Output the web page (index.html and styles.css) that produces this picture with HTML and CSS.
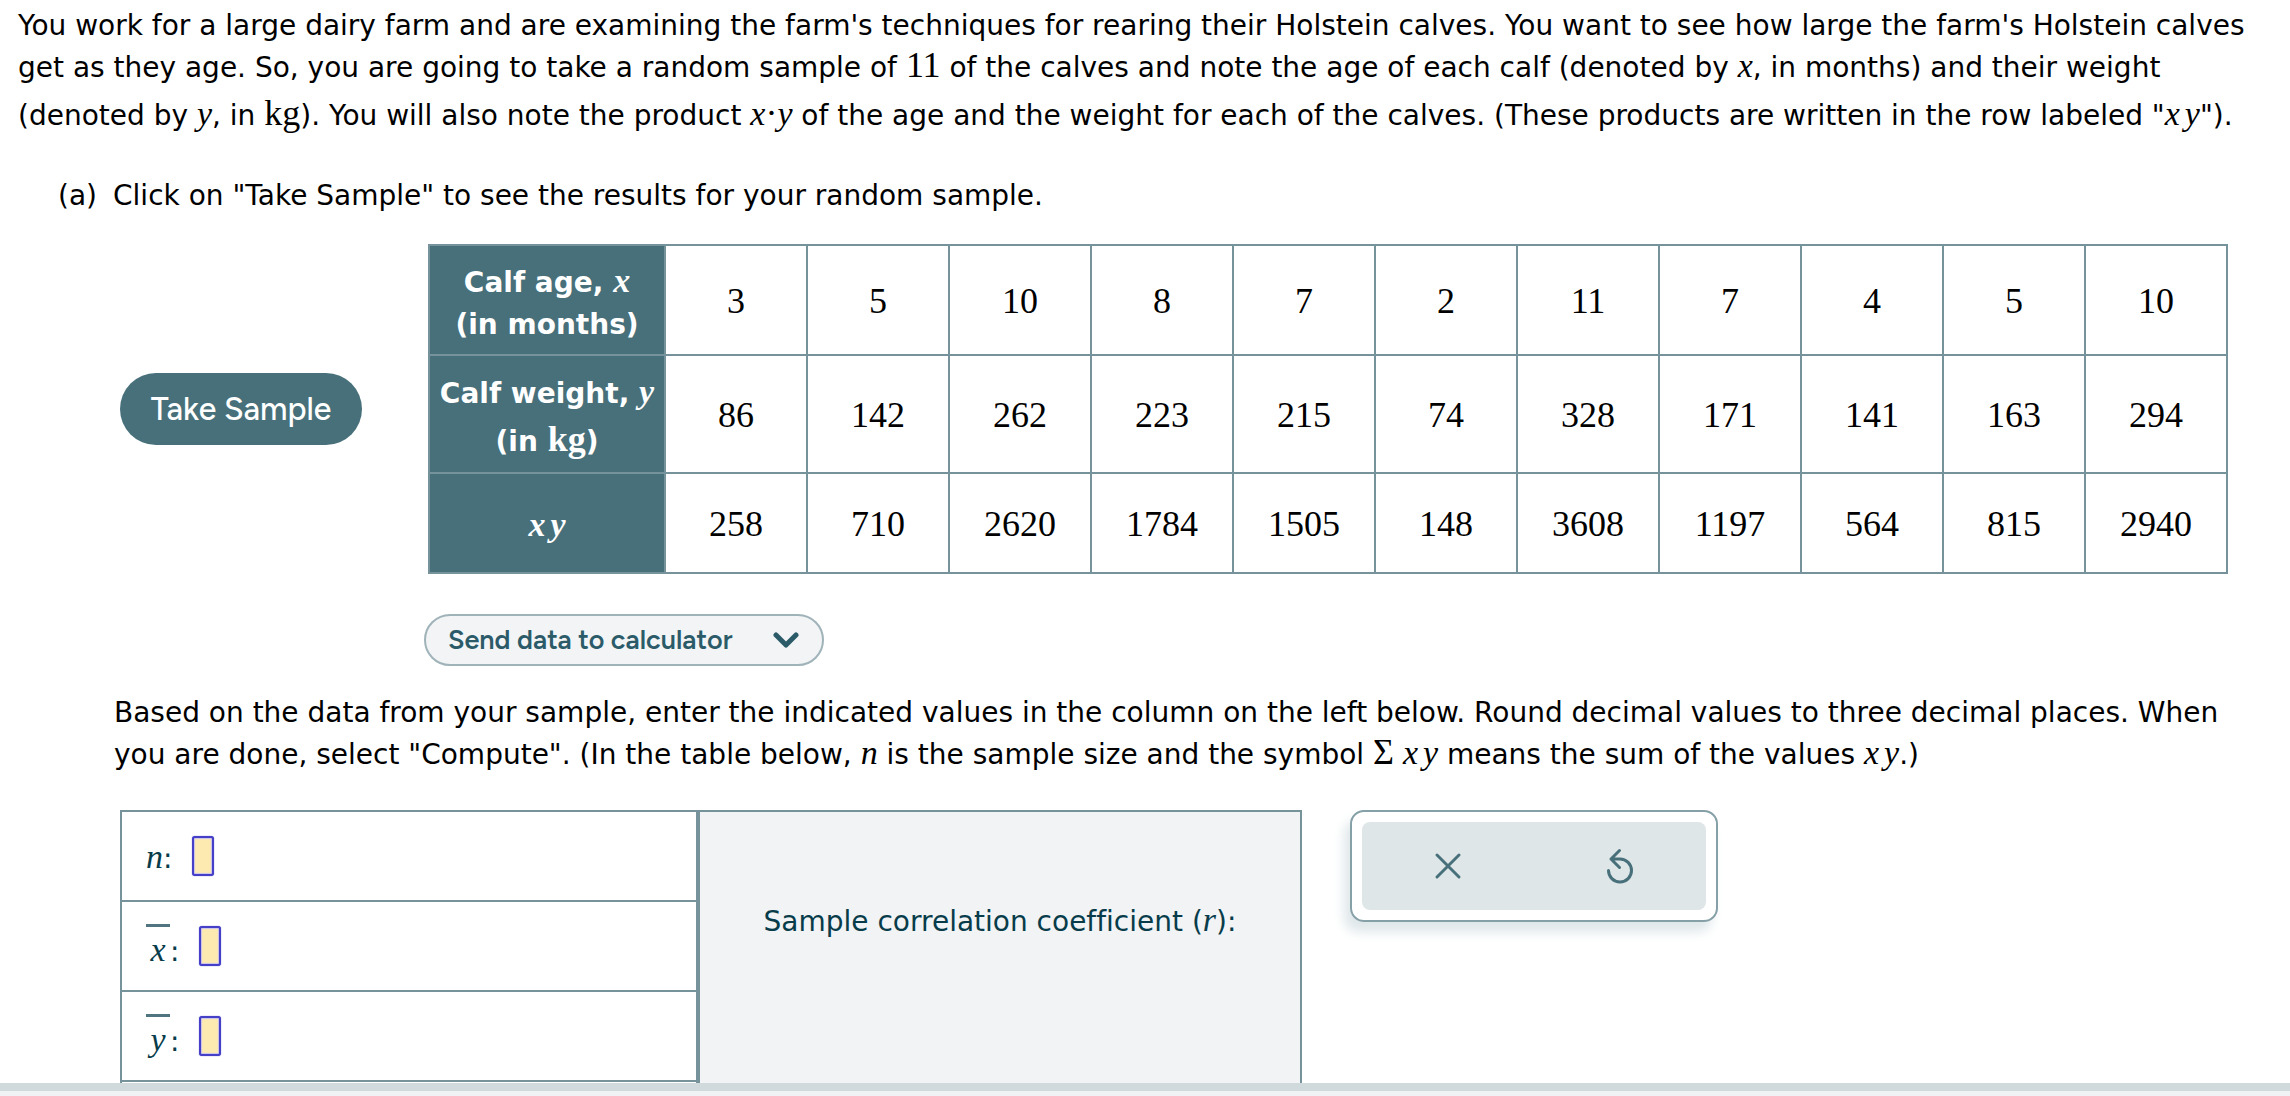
FILE: index.html
```html
<!DOCTYPE html>
<html lang="en">
<head>
  <meta charset="UTF-8">
  <title>Sample correlation coefficient</title>
  <link rel="stylesheet" href="styles.css">
</head>
<body>

  <main class="problem">
    <p class="intro">
      You work for a large dairy farm and are examining the farm's techniques for rearing their Holstein calves. You want to see how large the farm's Holstein calves<br>
      get as they age. So, you are going to take a random sample of <span class="math">11</span> of the calves and note the age of each calf (denoted by <i class="math">x</i>, in months) and their weight<br>
      (denoted by <i class="math">y</i>, in <span class="math unit">kg</span>). You will also note the product <i class="math">x</i><span class="math">·</span><i class="math">y</i> of the age and the weight for each of the calves. (These products are written in the row labeled "<i class="math pair">x<span>y</span></i>").
    </p>

    <div class="part">
      <span>(a)</span>
      <p>Click on "Take Sample" to see the results for your random sample.</p>
    </div>

    <div class="sample">
      <button class="take-sample" type="button">Take Sample</button>
      <div class="data-wrap">
        <table class="data">
          <tbody>
            <tr class="row-age">
              <th scope="row">Calf age, <i class="math">x</i><br>(in months)</th>
              <td>3</td><td>5</td><td>10</td><td>8</td><td>7</td><td>2</td><td>11</td><td>7</td><td>4</td><td>5</td><td>10</td>
            </tr>
            <tr class="row-weight">
              <th scope="row">Calf weight, <i class="math">y</i><br>(in <span class="math unit">kg</span>)</th>
              <td>86</td><td>142</td><td>262</td><td>223</td><td>215</td><td>74</td><td>328</td><td>171</td><td>141</td><td>163</td><td>294</td>
            </tr>
            <tr class="row-product">
              <th scope="row"><i class="math pair">x<span>y</span></i></th>
              <td>258</td><td>710</td><td>2620</td><td>1784</td><td>1505</td><td>148</td><td>3608</td><td>1197</td><td>564</td><td>815</td><td>2940</td>
            </tr>
          </tbody>
        </table>
      </div>
    </div>

    <div class="send">
      <select class="send-select" aria-label="Send data to calculator">
        <option>Send data to calculator</option>
      </select>
      <svg class="chevron" viewBox="0 0 26 18" aria-hidden="true"><path d="M3 4l10 10L23 4"/></svg>
    </div>

    <p class="directions">
      Based on the data from your sample, enter the indicated values in the column on the left below. Round decimal values to three decimal places. When<br>
      you are done, select "Compute". (In the table below, <i class="math">n</i> is the sample size and the symbol <span class="math">Σ</span> <i class="math pair">x<span>y</span></i> means the sum of the values <i class="math pair">x<span>y</span></i>.)
    </p>

    <div class="work">
      <div class="answers">
        <div class="values">
          <div class="value">
            <label for="n"><i class="math">n</i>:</label>
            <input id="n" type="text">
          </div>
          <div class="value">
            <label for="xbar"><i class="math bar">x</i>:</label>
            <input id="xbar" type="text">
          </div>
          <div class="value">
            <label for="ybar"><i class="math bar">y</i>:</label>
            <input id="ybar" type="text">
          </div>
        </div>
        <div class="result">Sample correlation coefficient (<i class="math">r</i>):</div>
      </div>

      <div class="tools">
        <div class="tools-inner">
          <button type="button" aria-label="Clear">
            <svg viewBox="0 0 36 36"><path d="M7 7l22 22M29 7L7 29"/></svg>
          </button>
          <button type="button" aria-label="Undo">
            <svg viewBox="0 0 36 36"><path d="M6.500 22.500A11.500 11.500 0 1 0 18 11H9M17.500 2.500L9 11l8.500 8.500"/></svg>
          </button>
        </div>
      </div>
    </div>
  </main>

  <footer class="bottom-bar"></footer>

</body>
</html>
```
FILE: styles.css
```css
* {
  box-sizing: border-box;
}

body {
  margin: 0;
  height: 100vh;
  display: flex;
  flex-direction: column;
  overflow: hidden;
  background-color: #fff;
  color: #000;
  font-family: Verdana, "DejaVu Sans", sans-serif;
  font-size: 28px;
  line-height: 42px;
  font-variant-ligatures: none;
}

p {
  margin: 0;
}

button,
select,
input {
  font: inherit;
}

.problem {
  flex: 1;
  min-height: 0;
  display: flex;
  flex-direction: column;
  overflow: hidden;
  padding: 5px 0 0 18px;
}

/* math text */
.math {
  font-family: "Liberation Serif", serif;
  font-size: 36px;
  line-height: 0;
}

i.math {
  font-size: 34px;
}

.unit {
  line-height: 48px;
}

.pair span {
  margin-left: 5px;
}

.intro,
.directions {
  white-space: nowrap;
}

.part {
  display: flex;
  gap: 16px;
  margin-top: 38px;
  padding-left: 40px;
}

/* sample table */
.sample {
  display: flex;
  align-items: center;
  gap: 66px;
  margin-top: 27px;
  padding: 0 62px 0 102px;
}

.take-sample {
  flex: none;
  width: 242px;
  height: 72px;
  padding: 0;
  border: none;
  border-radius: 36px;
  background-color: #47707b;
  color: #fff;
  font-family: Figtree, Lato, sans-serif;
  font-size: 32px;
  font-weight: 500;
  cursor: pointer;
}

.data-wrap {
  flex: 1;
}

.data {
  width: 100%;
  border-collapse: collapse;
  table-layout: fixed;
}

.data th,
.data td {
  border: 2px solid #76929a;
  padding: 0;
  text-align: center;
}

.data th {
  width: 236px;
  padding-top: 7px;
  background-color: #47707b;
  color: #fff;
  white-space: nowrap;
}

.data td {
  padding-top: 2px;
  font-family: "Liberation Serif", serif;
  font-size: 36px;
}

.row-age {
  height: 110px;
}

.row-weight {
  height: 118px;
}

.row-product {
  height: 100px;
}

/* calculator drop-down */
.send {
  position: relative;
  flex: none;
  width: 400px;
  margin: 40px 0 25px 406px;
  height: 52px;
}

.send-select {
  appearance: none;
  width: 100%;
  height: 100%;
  padding: 0 60px 0 22px;
  border: 2px solid #9fb3b9;
  border-radius: 26px;
  background-color: #f2f4f6;
  color: #2b5b69;
  font-family: Figtree, Lato, sans-serif;
  font-size: 27px;
  font-weight: 600;
}

.chevron {
  position: absolute;
  top: 17px;
  right: 25px;
  width: 26px;
  height: 18px;
  fill: none;
  stroke: #2b5b69;
  stroke-width: 5;
  stroke-linecap: round;
  stroke-linejoin: round;
  pointer-events: none;
}

.directions {
  padding: 1px 0 0 96px;
}

/* answer area */
.work {
  flex: 1;
  display: flex;
  gap: 48px;
  min-height: 0;
  margin-top: 34px;
  padding-left: 102px;
}

.answers {
  flex: none;
  display: flex;
  border: 2px solid #76929a;
  border-bottom: none;
  color: #083c4a;
}

.values {
  width: 578px;
  border-right: 4px solid #76929a;
}

.value {
  display: flex;
  align-items: center;
  gap: 20px;
  height: 90px;
  padding-left: 24px;
  border-bottom: 2px solid #76929a;
}

.value label {
  padding-top: 5px;
}

.bar {
  display: inline-block;
  width: 24px;
  height: 36px;
  border-top: 3px solid #507480;
  line-height: 46px;
  text-align: center;
}

.value input {
  width: 22px;
  height: 40px;
  padding: 0;
  border: 2px solid #4640c8;
  border-radius: 3px;
  background-color: #fdeab0;
  box-shadow: 0 0 1px #4640c8, inset 0 0 1px 1px #c9c2ee;
}

.result {
  width: 600px;
  padding-top: 89px;
  background-color: #f1f3f5;
  text-align: center;
}

.tools {
  flex: none;
  width: 368px;
  height: 112px;
  padding: 10px;
  border: 2px solid #86a0a8;
  border-radius: 14px;
  box-shadow: -6px 10px 12px #dfe7ea;
}

.tools-inner {
  display: flex;
  height: 100%;
  border-radius: 8px;
  background-color: #dfe6e8;
}

.tools button {
  flex: 1;
  display: flex;
  align-items: center;
  justify-content: center;
  padding: 0;
  border: none;
  background: none;
  cursor: pointer;
}

.tools svg {
  width: 36px;
  height: 36px;
  fill: none;
  stroke: #47707b;
  stroke-width: 3;
  stroke-linecap: round;
  stroke-linejoin: round;
}

.bottom-bar {
  flex: none;
  height: 13px;
  border-top: 8px solid #d0d9dc;
  background-color: #f0f2f4;
}
```
